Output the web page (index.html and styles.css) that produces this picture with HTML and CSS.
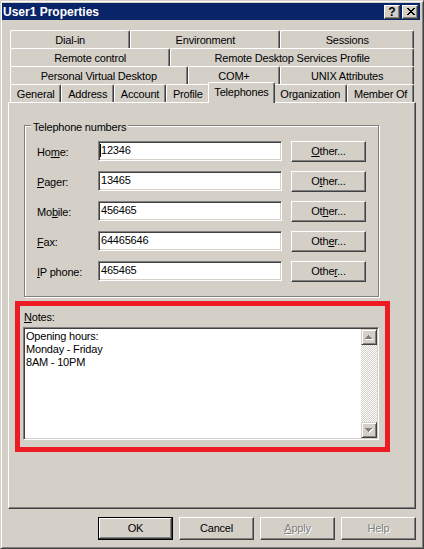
FILE: index.html
```html
<!DOCTYPE html>
<html>
<head>
<meta charset="utf-8">
<title>User1 Properties</title>
<link rel="stylesheet" href="styles.css">
</head>
<body>
<div class="window">
  <div class="titlebar">
    <span class="title">User1 Properties</span>
    <div class="cbtns">
      <span class="cbtn help">?</span>
      <span class="cbtn">
        <svg width="8" height="7" viewBox="0 0 8 7" shape-rendering="crispEdges"><path d="M0 0h2v1h1v1h2V1h1V0h2v1H7v1H6v1H5v1h1v1h1v1h1v1H6V6H5V5H3v1H2v1H0V6h1V5h1V4h1V3H2V2H1V1H0z" fill="#000"/></svg>
      </span>
    </div>
  </div>

  <div class="tabctrl">
    <div class="tabrow">
      <div class="tab">Dial-in</div>
      <div class="tab">Environment</div>
      <div class="tab">Sessions</div>
    </div>
    <div class="tabrow">
      <div class="tab">Remote control</div>
      <div class="tab">Remote Desktop Services Profile</div>
    </div>
    <div class="tabrow">
      <div class="tab">Personal Virtual Desktop</div>
      <div class="tab">COM+</div>
      <div class="tab">UNIX Attributes</div>
    </div>
    <div class="tabrow">
      <div class="tab">General</div>
      <div class="tab">Address</div>
      <div class="tab">Account</div>
      <div class="tab">Profile</div>
      <div class="tab sel">Telephones</div>
      <div class="tab">Organization</div>
      <div class="tab">Member Of</div>
    </div>

    <div class="panel">
      <div class="group">
        <div class="legend">Telephone numbers</div>
        <div class="grid">
          <span class="lbl">Ho<u>m</u>e:</span>
          <div class="field"><span class="caret"></span>12346</div>
          <div class="btn"><u>O</u>ther...</div>

          <span class="lbl"><u>P</u>ager:</span>
          <div class="field">13465</div>
          <div class="btn">O<u>t</u>her...</div>

          <span class="lbl">Mo<u>b</u>ile:</span>
          <div class="field">456465</div>
          <div class="btn">Ot<u>h</u>er...</div>

          <span class="lbl"><u>F</u>ax:</span>
          <div class="field">64465646</div>
          <div class="btn">Oth<u>e</u>r...</div>

          <span class="lbl"><u>I</u>P phone:</span>
          <div class="field">465465</div>
          <div class="btn">Othe<u>r</u>...</div>
        </div>
      </div>

      <div class="notes-label"><u>N</u>otes:</div>
      <div class="notes">
        <div class="notes-text">
          <span class="line">Opening hours:</span>
          <span class="line">Monday&nbsp;-&nbsp;Friday</span>
          <span class="line">8AM - 10PM</span>
        </div>
        <div class="sb">
          <div class="sbbtn">
            <svg width="8" height="5" viewBox="0 0 8 5" shape-rendering="crispEdges"><path transform="translate(1 1)" d="M3 0h1v1h1v1h1v1h1v1H0V3h1V2h1V1h1z" fill="#fff"/><path d="M3 0h1v1h1v1h1v1h1v1H0V3h1V2h1V1h1z" fill="#808080"/></svg>
          </div>
          <div class="track"></div>
          <div class="sbbtn">
            <svg width="8" height="5" viewBox="0 0 8 5" shape-rendering="crispEdges"><path transform="translate(1 1)" d="M0 0h7v1H6v1H5v1H4v1H3V3H2V2H1V1H0z" fill="#fff"/><path d="M0 0h7v1H6v1H5v1H4v1H3V3H2V2H1V1H0z" fill="#808080"/></svg>
          </div>
        </div>
      </div>

      <div class="highlight"></div>
    </div>
  </div>

  <div class="actions">
    <div class="btn dbtn default">OK</div>
    <div class="btn dbtn">Cancel</div>
    <div class="btn dbtn disabled"><u>A</u>pply</div>
    <div class="btn dbtn disabled">Help</div>
  </div>
</div>
</body>
</html>
```
FILE: styles.css
```css
html, body {
  margin: 0;
  padding: 0;
  background: #d4d0c8;
}

body {
  font-family: "Liberation Sans", Arial, sans-serif;
  font-size: 11px;
  letter-spacing: -0.2px;
  color: #000;
}

u {
  text-underline-offset: 1px;
}

.window {
  box-sizing: border-box;
  width: 424px;
  height: 549px;
  display: flex;
  flex-direction: column;
  padding: 2px 1px;
  background: #d4d0c8;
  border: 1px solid;
  border-color: #d4d0c8 #404040 #404040 #d4d0c8;
  box-shadow: inset 1px 1px #fff, inset -1px -1px #808080;
}

/* Title bar */
.titlebar {
  flex: none;
  height: 17px;
  margin-right: 2px;
  padding: 0 2px 0 1px;
  background: #0a246a;
  color: #fff;
  display: flex;
  align-items: center;
  justify-content: space-between;
}

.title {
  font-size: 12px;
  font-weight: bold;
  letter-spacing: 0;
}

.cbtns {
  display: flex;
  gap: 2px;
}

.cbtn {
  box-sizing: border-box;
  width: 16px;
  height: 14px;
  background: #d4d0c8;
  border: 1px solid;
  border-color: #fff #404040 #404040 #fff;
  box-shadow: inset -1px -1px #808080;
  display: flex;
  align-items: center;
  justify-content: center;
  color: #000;
}

.cbtn svg {
  display: block;
  margin-left: 1px;
}

.cbtn.help {
  font-size: 12px;
  font-weight: bold;
  letter-spacing: 0;
  line-height: 12px;
}

/* Tabs */
.tabctrl {
  flex: 1;
  min-height: 0;
  margin: 10px 6px 0;
  display: flex;
  flex-direction: column;
}

.tabrow {
  flex: none;
  height: 18px;
  margin: 0 2px;
  display: flex;
}

.tab {
  flex: 1 1 auto;
  box-sizing: border-box;
  height: 18px;
  padding: 1px 4px 0;
  line-height: 16px;
  text-align: center;
  white-space: nowrap;
  background: #d4d0c8;
  border: 1px solid;
  border-bottom: none;
  border-color: #fff #404040 #404040 #fff;
  box-shadow: inset -1px 0 #808080;
  border-radius: 2px 2px 0 0;
}

.tab.sel {
  position: relative;
  z-index: 1;
  height: 21px;
  margin: -2px -2px 0;
}

.panel {
  flex: 1;
  position: relative;
  border: 1px solid;
  border-color: #fff #404040 #404040 #fff;
  box-shadow: inset -1px -1px #808080;
  padding: 22px 0 0 15px;
}

/* Group box */
.group {
  box-sizing: border-box;
  width: 355px;
  border: 1px solid #808080;
  box-shadow: inset 1px 1px #fff, 1px 1px #fff;
  padding: 0 0 14px 12px;
}

.legend {
  width: fit-content;
  margin: -5px 0 0 -6px;
  padding: 0 2px;
  line-height: 13px;
  background: #d4d0c8;
}

.grid {
  display: grid;
  grid-template-columns: 52px 184px 75px;
  grid-auto-rows: 21px;
  column-gap: 9px;
  row-gap: 9px;
  margin-top: 7px;
  align-items: center;
}

.lbl {
  white-space: nowrap;
}

.field {
  align-self: start;
  box-sizing: border-box;
  height: 20px;
  padding: 0 1px 0 2px;
  line-height: 17px;
  background: #fff;
  border: 1px solid;
  border-color: #808080 #fff #fff #808080;
  box-shadow: inset 1px 1px #404040, inset -1px -1px #d4d0c8;
  white-space: nowrap;
}

.caret {
  display: inline-block;
  width: 1px;
  height: 13px;
  margin: 0 0 0 -1px;
  background: #000;
  vertical-align: -3px;
}

.btn {
  box-sizing: border-box;
  width: 75px;
  height: 21px;
  line-height: 18px;
  text-align: center;
  background: #d4d0c8;
  border: 1px solid;
  border-color: #fff #404040 #404040 #fff;
  box-shadow: inset -1px -1px #808080;
  white-space: nowrap;
}

/* Notes */
.notes-label {
  margin-top: 13px;
  line-height: 14px;
}

.notes {
  box-sizing: border-box;
  width: 356px;
  height: 113px;
  margin: 3px 0 0 -1px;
  display: flex;
  background: #fff;
  border: 1px solid;
  border-color: #808080 #fff #fff #808080;
  box-shadow: inset 1px 1px #404040, inset -1px -1px #d4d0c8;
}

.notes-text {
  flex: 1;
  padding: 2px 1px 0 2px;
  line-height: 13px;
  color: #000;
  display: flex;
  flex-direction: column;
  align-items: flex-start;
}

.line {
  display: block;
  color: #000;
  white-space: nowrap;
}

.sb {
  width: 16px;
  margin: 1px 1px 1px 0;
  display: flex;
  flex-direction: column;
}

.sbbtn {
  flex: none;
  box-sizing: border-box;
  height: 16px;
  background: #d4d0c8;
  border: 1px solid;
  border-color: #d4d0c8 #404040 #404040 #d4d0c8;
  box-shadow: inset 1px 1px #fff, inset -1px -1px #808080;
  display: flex;
  align-items: center;
  justify-content: center;
}

.sbbtn svg {
  display: block;
}

.track {
  flex: 1;
  background: repeating-conic-gradient(#d4d0c8 0 25%, #fff 0 50%) 0 0 / 2px 2px;
}

.highlight {
  position: absolute;
  left: 6px;
  top: 198px;
  width: 375px;
  height: 151px;
  box-sizing: border-box;
  border: 5px solid #ed1c24;
  pointer-events: none;
}

/* Dialog buttons */
.actions {
  flex: none;
  display: flex;
  justify-content: flex-end;
  gap: 6px;
  margin: 8px 6px 6px 0;
}

.dbtn {
  height: 23px;
  line-height: 20px;
}

.dbtn.default {
  border: 1px solid #000;
  box-shadow: inset -1px -1px #404040, inset 1px 1px #fff, inset -2px -2px #808080;
}

.dbtn.disabled {
  color: #808080;
  text-shadow: 1px 1px 0 #fff;
}
```
